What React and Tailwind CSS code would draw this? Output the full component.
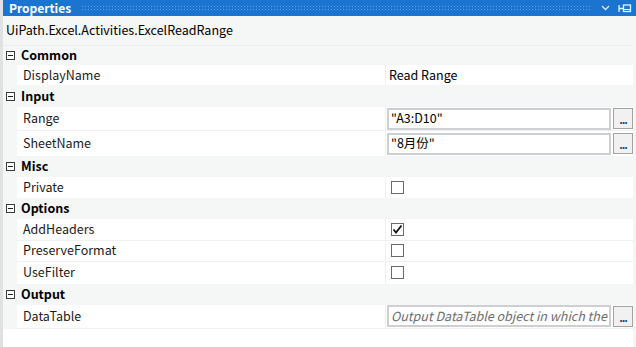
import React from "react";

const FONT = { fontFamily: '"Noto Sans CJK SC", "Noto Sans", sans-serif' };

const Minus = () => (
  <span className="w-[9px] h-[9px] border border-[#3c3c3c] bg-white flex items-center justify-center shrink-0">
    <span className="w-[5px] h-px bg-[#1e1e1e]" />
  </span>
);

const Category = ({ name, h = "h-[21px]" }) => (
  <div className={`${h} flex items-center gap-[6px] pl-[3px] bg-[#f5f6f6]`}>
    <Minus />
    <span className="font-bold text-[12.5px] text-black">{name}</span>
  </div>
);

const Checkbox = ({ checked }) => (
  <span className="w-[13px] h-[13px] border border-[#6b6b6b] bg-white flex items-center justify-center">
    {checked && (
      <svg width="11" height="11" viewBox="0 0 11 11">
        <path d="M1.5 5.5 L4 8.5 L9.5 1.5" fill="none" stroke="#111" strokeWidth="1.8" />
      </svg>
    )}
  </span>
);

const Dots = () => (
  <button className="w-[20px] h-[21px] border border-[#a3a3a3] bg-[#f1f1f1] flex items-end justify-center pb-[3px] shrink-0">
    <span className="text-[11px] leading-none font-bold text-[#1a3f80] tracking-[-1px]">...</span>
  </button>
);

const TextBox = ({ value, placeholder }) => (
  <div className="flex-1 h-[22px] border-2 border-[#cdcfd3] bg-white flex items-center px-[2px] overflow-hidden min-w-0">
    {value ? (
      <span className="text-[12.5px] text-black whitespace-nowrap">{value}</span>
    ) : (
      <span className="text-[12.5px] italic text-[#6d6d6d] whitespace-nowrap">{placeholder}</span>
    )}
  </div>
);

const Row = ({ label, h = "h-[21.5px]", children, last }) => (
  <div className={`${h} flex bg-[#f5f6f6] min-w-0`}>
    <div className="w-[14px] shrink-0" />
    <div className={`flex-1 flex bg-white min-w-0 ${last ? "" : "border-b border-[#eff1f1]"}`}>
      <div className="w-[369px] shrink-0 flex items-center pl-[6px] border-r border-[#eff1f1] text-[12.5px] text-[#1b1b1b]">
        {label}
      </div>
      <div className="flex-1 flex items-center pl-[1px] gap-[2px] min-w-0">{children}</div>
    </div>
  </div>
);

export default function App() {
  return (
    <div className="w-[636px] h-[347px] flex bg-white overflow-hidden" style={FONT}>
      <div className="w-[3px] bg-[#dfe1e2] shrink-0" />
      <div className="flex-1 flex flex-col min-w-0">
        <div className="h-[16px] bg-[#1b75d0] flex items-center pl-[6px] pr-[4px] shrink-0">
          <span className="text-white font-semibold text-[12px] leading-[16px] whitespace-nowrap">Properties</span>
          <div className="flex-1 h-[6px] mx-[10px] bg-[radial-gradient(circle,#62a3e8_0.7px,transparent_0.8px)] bg-[length:3px_3px]" />
          <svg width="9" height="6" viewBox="0 0 9 6" className="mr-[8px]">
            <path d="M1 1 L4.5 4.5 L8 1" fill="none" stroke="#d6e7fa" strokeWidth="1.4" />
          </svg>
          <svg width="14" height="9" viewBox="0 0 14 9">
            <path d="M1 1 V8 M1 4.5 H5" stroke="#eaf3fd" strokeWidth="1.3" fill="none" />
            <rect x="5.5" y="1" width="7" height="6.5" fill="none" stroke="#eaf3fd" strokeWidth="1.3" />
            <path d="M5.5 5.5 H12.5" stroke="#eaf3fd" strokeWidth="1" />
          </svg>
        </div>
        <div className="flex-1 flex min-w-0">
          <div className="flex-1 flex flex-col min-w-0">
            <div className="h-[30px] bg-[#f5f6f6] border-b border-[#eceeee] flex items-center pl-[3px] text-[12.5px] text-black shrink-0">
              UiPath.Excel.Activities.ExcelReadRange
            </div>
            <Category name="Common" h="h-[19px]" />
            <Row label="DisplayName" h="h-[20px]" last>
              <span className="text-[12.5px] text-black pl-[2px]">Read Range</span>
            </Row>
            <Category name="Input" h="h-[22px]" />
            <Row label="Range" h="h-[24px]">
              <TextBox value={'"A3:D10"'} />
              <Dots />
            </Row>
            <Row label="SheetName" h="h-[25px]" last>
              <TextBox value={'"8月份"'} />
              <Dots />
            </Row>
            <Category name="Misc" />
            <Row label="Private" h="h-[21px]" last>
              <span className="pl-[4px]"><Checkbox /></span>
            </Row>
            <Category name="Options" />
            <Row label="AddHeaders">
              <span className="pl-[4px]"><Checkbox checked /></span>
            </Row>
            <Row label="PreserveFormat">
              <span className="pl-[4px]"><Checkbox /></span>
            </Row>
            <Row label="UseFilter" last>
              <span className="pl-[4px]"><Checkbox /></span>
            </Row>
            <Category name="Output" />
            <Row label="DataTable" h="h-[24px]">
              <TextBox placeholder="Output DataTable object in which the" />
              <Dots />
            </Row>
            <div className="flex-1 bg-white" />
          </div>
          <div className="w-[3px] bg-[#f5f6f6] shrink-0" />
        </div>
      </div>
    </div>
  );
}
